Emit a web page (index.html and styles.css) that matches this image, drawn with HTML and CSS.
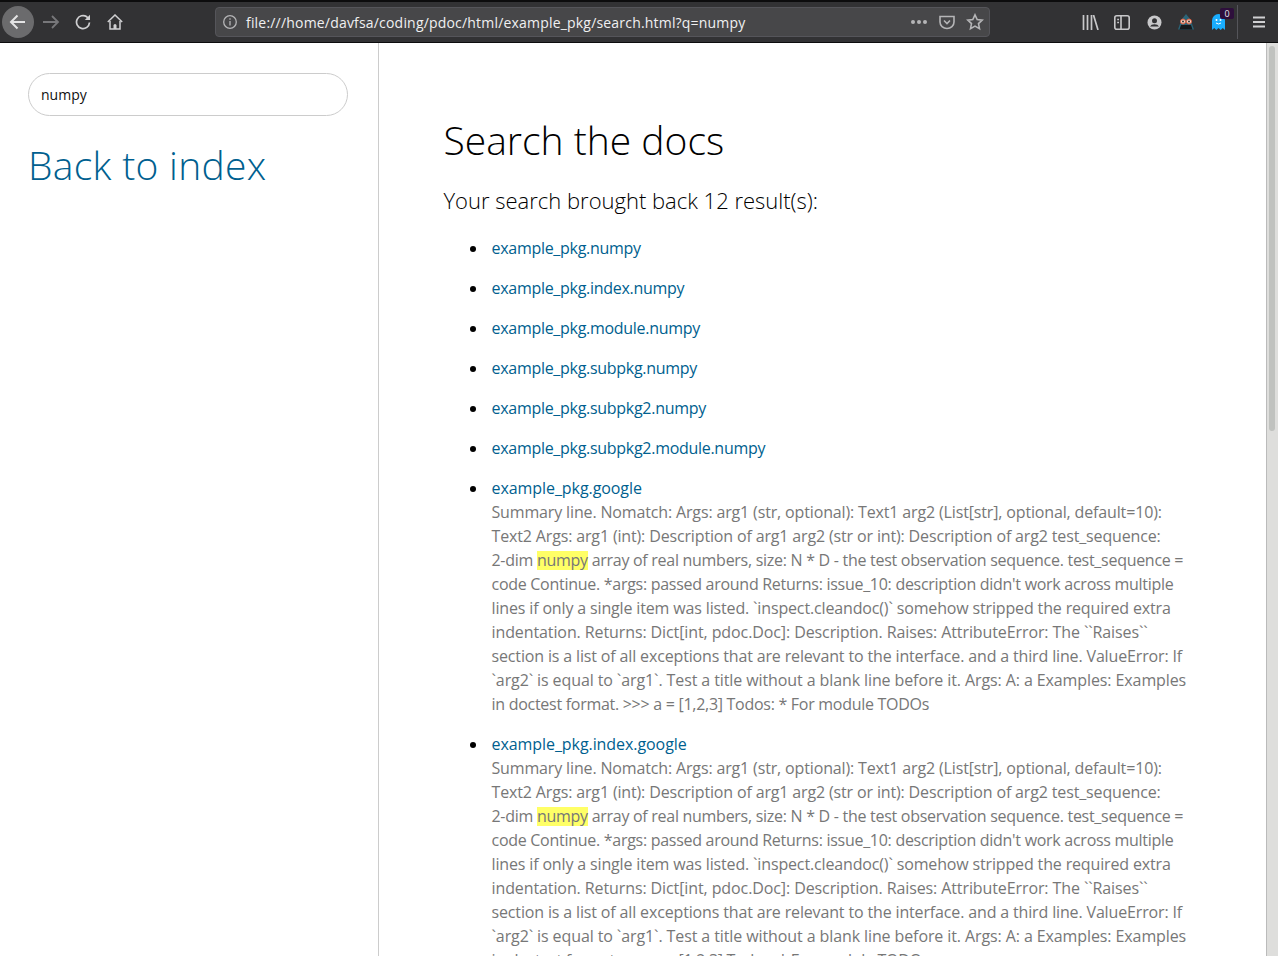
FILE: index.html
```html
<!DOCTYPE html>
<html lang="en">
<head>
  <meta charset="UTF-8">
  <title>Search the docs</title>
  <link rel="stylesheet" href="styles.css">
</head>
<body>
  <header class="toolbar">
    <div class="nav-buttons">
      <span class="back-btn">
        <svg width="20" height="20" viewBox="0 0 20 20" fill="none" stroke="#e4e4e5" stroke-width="2"><path d="M17 10H3M9.500 3.500 3 10l6.500 6.500"/></svg>
      </span>
      <span class="nav-btn first">
        <svg width="18" height="18" viewBox="0 0 18 18" fill="none" stroke="#77777a" stroke-width="1.800"><path d="M1 9h15M10 3l6 6-6 6"/></svg>
      </span>
      <span class="nav-btn">
        <svg width="16" height="16" viewBox="0 0 16 16" fill="none" stroke="#d0d0d2" stroke-width="1.700"><path d="M14.500 8.500A6.500 6.500 0 1 1 11.800 2.800L14 5"/><path d="M15 .8V6H9.800" fill="#d0d0d2" stroke="none"/></svg>
      </span>
      <span class="nav-btn">
        <svg width="16" height="16" viewBox="0 0 16 16" fill="none" stroke="#d0d0d2" stroke-width="1.500"><path d="M.8 8 8 1l7.200 7"/><path d="M3 7v8h10V7"/><path d="M6.500 15v-3.500a1.500 1.500 0 0 1 3 0V15z" fill="#d0d0d2" stroke="none"/></svg>
      </span>
    </div>
    <div class="url-bar">
      <svg class="info-icon" width="16" height="16" viewBox="0 0 16 16" fill="none" stroke="#b5b5b7" stroke-width="1.300"><circle cx="8" cy="8" r="6.300"/><path d="M8 7v4.500M8 4.200v1.500"/></svg>
      <span class="url-text">file:///home/davfsa/coding/pdoc/html/example_pkg/search.html?q=numpy</span>
      <span class="url-actions">
        <svg width="18" height="6" viewBox="0 0 18 6" fill="#b5b5b7"><circle cx="3" cy="3" r="2"/><circle cx="9" cy="3" r="2"/><circle cx="15" cy="3" r="2"/></svg>
        <svg width="16" height="16" viewBox="0 0 16 16" fill="none" stroke="#b5b5b7" stroke-width="1.600"><path d="M1 2.500h14V8A7 6.500 0 0 1 1 8z"/><path d="M5 6.500 8 9.500l3-3"/></svg>
        <svg width="18" height="18" viewBox="0 0 18 18" fill="none" stroke="#b5b5b7" stroke-width="1.600"><path d="M9 1.800l2.200 4.700 5 .6-3.700 3.500 1 5L9 13.100l-4.500 2.500 1-5L1.800 7.100l5-.6z"/></svg>
      </span>
    </div>
    <div class="tool-icons">
      <span class="tool-btn">
        <svg width="17" height="15" viewBox="0 0 17 15" fill="none" stroke="#c8c8ca" stroke-width="1.700"><path d="M1.500 0v15M5.500 0v15M9.500 0v15M11.500 0l4.500 15"/></svg>
      </span>
      <span class="tool-btn">
        <svg width="16" height="15" viewBox="0 0 16 15" fill="none" stroke="#c8c8ca" stroke-width="1.600"><rect x=".8" y=".8" width="14.400" height="13.400" rx="2"/><path d="M7 .8v13.400M3.200 4.500H5M3.200 7.500H5"/></svg>
      </span>
      <span class="tool-btn">
        <svg width="15" height="15" viewBox="0 0 15 15"><circle cx="7.500" cy="7.500" r="7" fill="#c8c8ca"/><circle cx="7.500" cy="5.800" r="2.500" fill="#323234"/><path d="M3 11.500a4.800 3.600 0 0 1 9 0z" fill="#323234"/></svg>
      </span>
      <span class="tool-btn">
        <svg width="16" height="16" viewBox="0 0 16 16"><path d="M8 0 12.500 5.500 16 15.500H0L3.500 5.500z" fill="#2a6478"/><path d="M3 11h10l1.500 4.500h-13z" fill="#15191c"/><circle cx="5" cy="7.500" r="2.500" fill="#f5d4c4" stroke="#d6583a"/><circle cx="11" cy="7.500" r="2.500" fill="#f5d4c4" stroke="#d6583a"/><circle cx="5" cy="7.500" r="1" fill="#333"/><circle cx="11" cy="7.500" r="1" fill="#333"/></svg>
      </span>
      <span class="tool-btn ghost">
        <svg width="13" height="16" viewBox="0 0 13 16"><path d="M0 6.500a6.500 6.500 0 0 1 13 0V16l-2.200-2-2.100 2-2.200-2-2.200 2-2.100-2L0 16z" fill="#19aeff"/><circle cx="4.500" cy="6" r="1" fill="#fff"/><circle cx="8.500" cy="6" r="1" fill="#fff"/><path d="M4 9q2.500 2 5 0" fill="none" stroke="#fff"/></svg>
        <span class="ghost-badge">0</span>
      </span>
    </div>
    <div class="menu-wrap">
      <svg width="12" height="12" viewBox="0 0 12 12" stroke="#d0d0d2" stroke-width="1.800"><path d="M0 1.500h12M0 6h12M0 10.500h12"/></svg>
    </div>
  </header>

  <div class="page">
    <nav class="sidebar">
      <input class="search-box" type="text" value="numpy">
      <h1 class="back-link"><a href="#">Back to index</a></h1>
    </nav>
    <main class="content">
      <h1 class="title">Search the docs</h1>
      <h2 class="subtitle">Your search brought back 12 result(s):</h2>
      <ul class="results">
        <li><a href="#">example_pkg.numpy</a></li>
        <li><a href="#">example_pkg.index.numpy</a></li>
        <li><a href="#">example_pkg.module.numpy</a></li>
        <li><a href="#">example_pkg.subpkg.numpy</a></li>
        <li><a href="#">example_pkg.subpkg2.numpy</a></li>
        <li><a href="#">example_pkg.subpkg2.module.numpy</a></li>
        <li>
          <a class="wide" href="#">example_pkg.google</a>
          <p class="snippet">Summary line. Nomatch: Args: arg1 (str, optional): Text1 arg2 (List[str], optional, default=10):<br>Text2 Args: arg1 (int): Description of arg1 arg2 (str or int): Description of arg2 test_sequence:<br><span class="tight">2-dim <mark>numpy</mark> array of real numbers, size: N * D - the test observation sequence. test_sequence =</span><br><span class="tight">code Continue. *args: passed around Returns: issue_10: description didn't work across multiple</span><br>lines if only a single item was listed. `inspect.cleandoc()` somehow stripped the required extra<br><span class="loose">indentation. Returns: Dict[int, pdoc.Doc]: Description. Raises: AttributeError: The ``Raises``</span><br>section is a list of all exceptions that are relevant to the interface. and a third line. ValueError: If<br><span class="loose">`arg2` is equal to `arg1`. Test a title without a blank line before it. Args: A: a Examples: Examples</span><br><span class="tight">in doctest format. &gt;&gt;&gt; a = [1,2,3] Todos: * For module TODOs</span></p>
        </li>
        <li>
          <a class="wide" href="#">example_pkg.index.google</a>
          <p class="snippet">Summary line. Nomatch: Args: arg1 (str, optional): Text1 arg2 (List[str], optional, default=10):<br>Text2 Args: arg1 (int): Description of arg1 arg2 (str or int): Description of arg2 test_sequence:<br><span class="tight">2-dim <mark>numpy</mark> array of real numbers, size: N * D - the test observation sequence. test_sequence =</span><br><span class="tight">code Continue. *args: passed around Returns: issue_10: description didn't work across multiple</span><br>lines if only a single item was listed. `inspect.cleandoc()` somehow stripped the required extra<br><span class="loose">indentation. Returns: Dict[int, pdoc.Doc]: Description. Raises: AttributeError: The ``Raises``</span><br>section is a list of all exceptions that are relevant to the interface. and a third line. ValueError: If<br><span class="loose">`arg2` is equal to `arg1`. Test a title without a blank line before it. Args: A: a Examples: Examples</span><br><span class="tight">in doctest format. &gt;&gt;&gt; a = [1,2,3] Todos: * For module TODOs</span></p>
        </li>
      </ul>
    </main>
    <div class="scrollbar"><div class="scroll-thumb"></div></div>
  </div>
</body>
</html>
```

FILE: styles.css
```css
html, body {
  height: 100%;
}

body {
  margin: 0;
  overflow: hidden;
  display: flex;
  flex-direction: column;
  font-family: "Open Sans", "Noto Sans", sans-serif;
  background: #fff;
  color: #000;
}

a {
  color: #005f8f;
  text-decoration: none;
}

/* browser chrome */
.toolbar {
  flex: 0 0 43px;
  box-sizing: border-box;
  height: 43px;
  display: flex;
  align-items: center;
  background: #323234;
  border-top: 2px solid #0c0c0d;
  border-bottom: 1px solid #0c0c0d;
}

.nav-buttons {
  display: flex;
  align-items: center;
  width: 215px;
  padding-left: 2px;
  box-sizing: border-box;
}

.back-btn {
  width: 32px;
  height: 32px;
  border-radius: 50%;
  background: #6b6b6d;
  display: flex;
  align-items: center;
  justify-content: center;
}

.nav-btn {
  width: 32px;
  height: 32px;
  display: flex;
  align-items: center;
  justify-content: center;
}

.nav-btn.first {
  margin-left: 1px;
}

.url-bar {
  width: 775px;
  height: 30px;
  box-sizing: border-box;
  display: flex;
  align-items: center;
  background: #474749;
  border: 1px solid #55555a;
  border-radius: 4px;
  padding: 0 5px 0 6px;
}

.info-icon {
  flex: none;
}

.url-text {
  margin-left: 8px;
  color: #f0f0f1;
  font-size: 14px;
  letter-spacing: .19px;
  white-space: nowrap;
  flex: 1;
}

.url-actions {
  display: flex;
  align-items: center;
  gap: 11px;
}

.tool-icons {
  margin-left: 84px;
  display: flex;
  align-items: center;
}

.tool-btn {
  width: 32px;
  height: 32px;
  display: flex;
  align-items: center;
  justify-content: center;
}

.ghost {
  position: relative;
}

.ghost-badge {
  position: absolute;
  top: 2px;
  left: 18px;
  width: 14px;
  height: 11px;
  background: #2e0f3c;
  color: #e8e8f0;
  font-size: 9px;
  line-height: 11px;
  text-align: center;
  border-radius: 2px;
}

.menu-wrap {
  margin-left: 3px;
  height: 34px;
  padding-left: 15px;
  border-left: 1px solid #55555a;
  display: flex;
  align-items: center;
}

/* page */
.page {
  flex: 1;
  display: flex;
  min-height: 0;
}

.sidebar {
  flex: 0 0 379px;
  box-sizing: border-box;
  padding: 30px 30px 0 28px;
  border-right: 1px solid #ccc;
}

.search-box {
  display: block;
  box-sizing: border-box;
  width: 320px;
  height: 43px;
  padding: 0 12px;
  border: 1px solid #ccc;
  border-radius: 22px;
  font: 14px "Open Sans", "Noto Sans", sans-serif;
  color: #111;
  outline: none;
}

.back-link {
  margin: 24px 0 0;
  font-size: 39px;
  font-weight: 300;
  line-height: 50px;
  letter-spacing: .3px;
}

.content {
  flex: 1;
  min-width: 0;
  overflow: hidden;
  padding: 73px 0 0 64.500px;
}

.title {
  margin: 0;
  font-size: 39px;
  font-weight: 300;
  line-height: 48px;
}

.subtitle {
  margin: 22px 0 0;
  font-size: 22px;
  font-weight: 300;
  line-height: 28px;
}

.results {
  margin: 22px 0 0;
  padding-left: 48px;
  list-style: none;
  font-size: 16px;
  line-height: 24px;
}

.results li {
  position: relative;
  margin-bottom: 16px;
}

.results li::before {
  content: "";
  position: absolute;
  left: -22px;
  top: 10px;
  width: 6px;
  height: 6px;
  border-radius: 50%;
  background: #000;
}

.results a {
  letter-spacing: -.29px;
}

.results a.wide {
  letter-spacing: -.07px;
}

.snippet {
  margin: 0;
  color: #777;
  letter-spacing: -.15px;
  white-space: nowrap;
}

.tight {
  letter-spacing: -.28px;
}

.loose {
  letter-spacing: -.1px;
}

mark {
  display: inline-block;
  line-height: 19px;
  background: #ffff66;
  color: #777;
}

.scrollbar {
  flex: 0 0 12px;
  box-sizing: border-box;
  background: #dededc;
  border-left: 1px solid #bbb;
  padding: 3px 3px 0 2px;
}

.scroll-thumb {
  height: 385px;
  background: #c0c2bf;
  border-radius: 3px;
}
```
